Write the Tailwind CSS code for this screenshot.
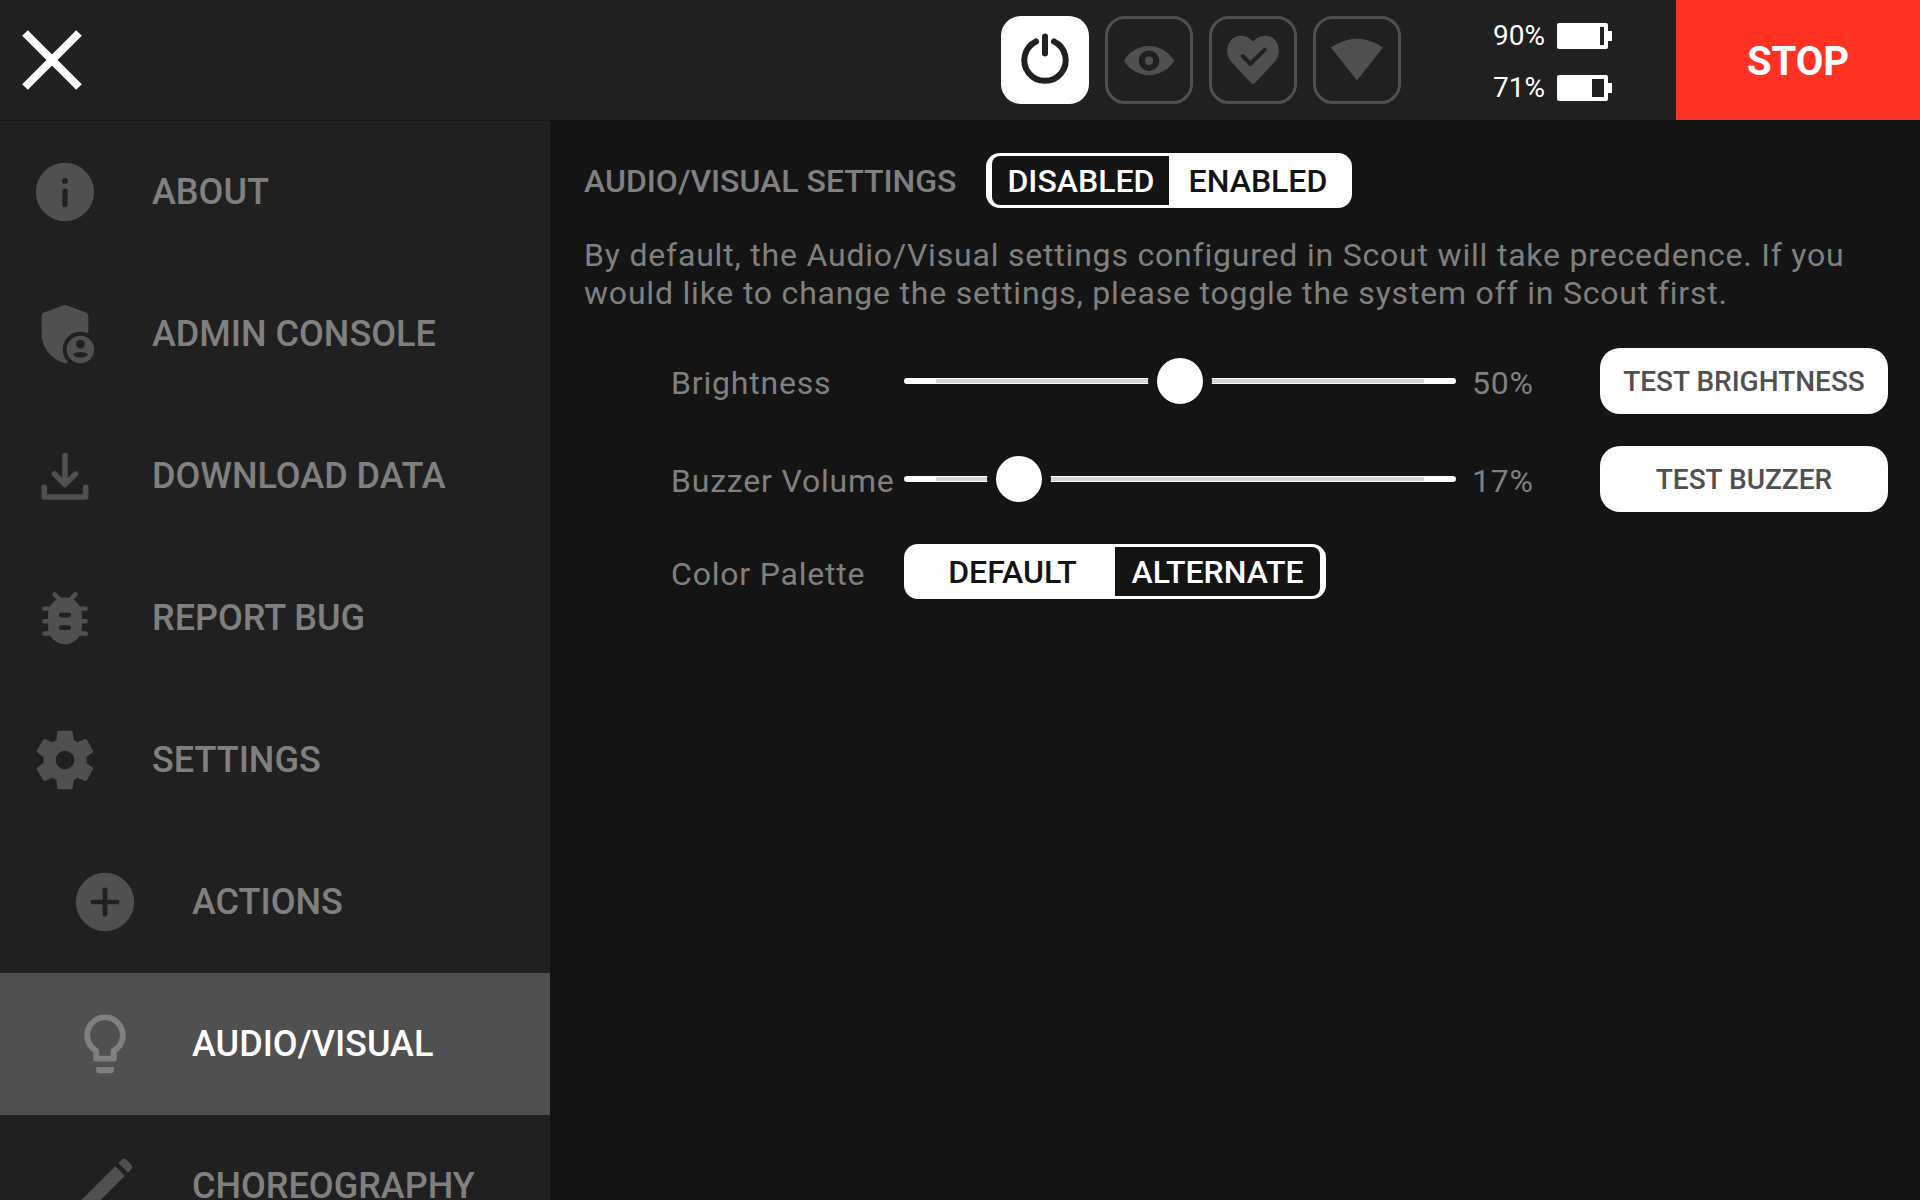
<!DOCTYPE html>
<html lang="en">
<head>
  <meta charset="UTF-8">
  <meta name="viewport" content="width=device-width,initial-scale=1">
  <title>Audio/Visual Settings</title>
  <script src="https://cdn.jsdelivr.net/npm/@tailwindcss/browser@4"></script>
</head>
<body class="h-screen flex flex-col overflow-hidden bg-[#141414] text-[#808080] font-['Roboto',sans-serif]">

  <!-- Top bar -->
  <header class="h-[120px] shrink-0 flex items-center bg-[#202020]">
    <button type="button" aria-label="Close" class="ml-[22px] text-white">
      <svg class="size-15" viewBox="0 0 60 60" fill="none" stroke="currentColor" stroke-width="8"><path d="M3 3l54 54M57 3L3 57"/></svg>
    </button>

    <div class="ml-auto mr-[92px] flex gap-4">
      <button type="button" aria-label="Power" class="size-[88px] rounded-[20px] bg-white text-[#202020] flex items-center justify-center">
        <svg class="size-15" viewBox="-30 -30 60 60" fill="none" stroke="currentColor" stroke-width="6" stroke-linecap="round"><path d="M-9-18.5A20.7 20.7 0 1 0 9-18.5M0-23.5V-6.500"/></svg>
      </button>
      <button type="button" aria-label="Vision" class="size-[88px] rounded-[20px] border-3 border-[#505050] text-[#505050] flex items-center justify-center">
        <svg class="size-15" viewBox="-30 -30 60 60" fill="currentColor"><path d="M-24.500 2Q-25.500.7-24.500-.6C-12-18.500 12-18.500 24.500-.6Q25.500.7 24.500 2C12 19.500-12 19.500-24.500 2z"/><circle cy=".7" r="10.300" fill="#202020"/><circle cy=".7" r="4.200"/></svg>
      </button>
      <button type="button" aria-label="Health" class="size-[88px] rounded-[20px] border-3 border-[#505050] text-[#505050] flex items-center justify-center">
        <svg class="size-15" viewBox="-30 -30 60 60" fill="currentColor"><path d="M-1.500 23.500L-22 1.500C-30-8-25-24.300-12-24.300C-7-24.300-3-22 0-18.500C3-22 7-24.300 12-24.300C25-24.300 30-8 22 1.500L1.500 23.500Q0 24.700-1.500 23.500z"/><path d="M-10.300-4l7.600 8L11.700-10.300" fill="none" stroke="#202020" stroke-width="4" stroke-linecap="round"/></svg>
      </button>
      <button type="button" aria-label="Signal" class="size-[88px] rounded-[20px] border-3 border-[#505050] text-[#505050] flex items-center justify-center">
        <svg class="size-15" viewBox="-30 -30 60 60" fill="currentColor"><path d="M-26-12.500Q0-30 26-12.500L.8 19.500Q0 20.500-.8 19.500z"/></svg>
      </button>
    </div>

    <!-- Batteries -->
    <div class="mr-16 pt-1 flex flex-col gap-5 text-[28px] leading-8 text-white">
      <div class="flex items-center justify-between gap-3">
        <span>90%</span>
        <svg class="w-[55px] h-[26px]" viewBox="0 0 55 26" fill="currentColor"><rect width="51" height="26" rx="2"/><path d="M51 8h4v10h-4z"/><path fill="#202020" d="M43 4h4v18h-4z"/></svg>
      </div>
      <div class="flex items-center justify-between gap-3">
        <span>71%</span>
        <svg class="w-[55px] h-[26px]" viewBox="0 0 55 26" fill="currentColor"><rect width="51" height="26" rx="2"/><path d="M51 8h4v10h-4z"/><path fill="#202020" d="M35 4h12v18H35z"/></svg>
      </div>
    </div>

    <button type="button" class="h-full w-[244px] pt-1 bg-[#ff3224] text-white text-[40px] font-bold">STOP</button>
  </header>

  <div class="flex-1 min-h-0 flex">
    <!-- Sidebar -->
    <nav class="w-[550px] shrink-0 overflow-hidden border-t border-[#161616] bg-[#202020] text-4xl font-medium">
      <a href="#" class="h-[142px] pl-[30px] flex items-center gap-[52px]">
        <svg class="size-[70px] text-[#505050]" viewBox="0 0 24 24" fill="currentColor"><circle cx="12" cy="12" r="10"/><circle cx="12" cy="8.200" r="1" fill="#202020"/><path d="M12 11.700v4.600" stroke="#202020" stroke-width="1.800" stroke-linecap="round"/></svg>
        ABOUT
      </a>
      <a href="#" class="h-[142px] pl-[30px] flex items-center gap-[52px]">
        <svg class="size-[70px] text-[#505050]" viewBox="0 0 24 24" fill="currentColor"><path d="M11.500 2.100a1.500 1.500 0 0 1 1 0l6.700 2.500a1.200 1.200 0 0 1 .8 1.100V11.500L13 21.800q-.5.300-1 .200c-4.600-1.100-8-5.400-8-10V5.700a1.200 1.200 0 0 1 .8-1.100z"/><circle cx="17.300" cy="17.300" r="6.100" fill="#202020"/><circle cx="17.300" cy="17.300" r="4.700"/><g fill="#202020"><circle cx="17.300" cy="15.500" r="1.500"/><path d="M14.700 19c1.400-1.100 3.800-1.100 5.200 0-1.400 1.500-3.800 1.500-5.200 0z"/></g></svg>
        ADMIN CONSOLE
      </a>
      <a href="#" class="h-[142px] pl-[30px] flex items-center gap-[52px]">
        <svg class="size-[70px] text-[#505050]" viewBox="0 0 24 24" fill="none" stroke="currentColor" stroke-width="1.900" stroke-linecap="round"><path d="M12 5v9.500M8.400 11.300l3.600 3.600 3.600-3.600M4.900 15.900v3.300h14.200v-3.300" stroke-linejoin="round"/></svg>
        DOWNLOAD DATA
      </a>
      <a href="#" class="h-[142px] pl-[30px] flex items-center gap-[52px]">
        <svg class="size-[70px] text-[#505050]" viewBox="0 0 24 24" fill="currentColor"><rect x="6.200" y="5" width="11.600" height="16" rx="5.800"/><path d="M8.400 3.900l2 2M15.600 3.900l-2 2M4.900 8.800h14.200M4.900 13.100h14.200M4.900 17.300h14.200" stroke="currentColor" stroke-width="1.500" stroke-linecap="round"/><path d="M10.700 11h2.600M10.700 15.300h2.600" stroke="#202020" stroke-width="1.600" stroke-linecap="round"/></svg>
        REPORT BUG
      </a>
      <a href="#" class="h-[142px] pl-[30px] flex items-center gap-[52px]">
        <svg class="size-[70px] text-[#505050]" viewBox="0 0 24 24" fill="currentColor"><path stroke="currentColor" stroke-width=".8" stroke-linejoin="round" d="M9.800 21.600l-.4-3q-1-.4-1.700-1l-2.800 1.200-2.200-3.800 2.400-1.800q-.2-1.200 0-2.400L2.700 9l2.200-3.800 2.800 1.200q.8-.6 1.700-1l.4-3h4.400l.4 3q1 .4 1.700 1l2.800-1.200L21.300 9l-2.400 1.800q.2 1.200 0 2.400l2.400 1.800-2.200 3.800-2.800-1.200q-.8.6-1.700 1l-.4 3z"/><circle cx="12" cy="12" r="3.200" fill="#202020"/></svg>
        SETTINGS
      </a>
      <a href="#" class="h-[142px] pl-[70px] flex items-center gap-[52px]">
        <svg class="size-[70px] text-[#505050]" viewBox="0 0 24 24" fill="currentColor"><circle cx="12" cy="12" r="10"/><path d="M12 7.800v8.400M7.800 12h8.400" stroke="#202020" stroke-width="1.600" stroke-linecap="round"/></svg>
        ACTIONS
      </a>
      <a href="#" aria-current="page" class="h-[142px] pl-[70px] flex items-center gap-[52px] bg-[#505050] text-white">
        <svg class="size-[70px] text-[#808080]" viewBox="0 0 24 24" fill="none" stroke="currentColor" stroke-width="2" stroke-linejoin="round"><path d="M9 17v-2.700a6.100 6.100 0 1 1 6 0V17z"/><path fill="currentColor" stroke="none" d="M9 19.900h6v1.100a1 1 0 0 1-1 1h-4a1 1 0 0 1-1-1z"/></svg>
        AUDIO/VISUAL
      </a>
      <a href="#" class="h-[142px] pl-[70px] flex items-center gap-[52px]">
        <svg class="size-[70px] text-[#505050]" viewBox="0 0 24 24" fill="currentColor"><path d="M2.600 21.400v-3.300L15.500 5.200l3.300 3.300L5.900 21.400zM16.600 4.100l1-1a1.300 1.300 0 0 1 1.800 0l1.500 1.500a1.300 1.300 0 0 1 0 1.800l-1 1z"/></svg>
        CHOREOGRAPHY
      </a>
    </nav>

    <!-- Settings panel -->
    <main class="flex-1 min-w-0 pt-[33px] pl-[34px] pr-8 text-[32px]">
      <div class="flex items-center gap-[30px]">
        <h1 id="av-label" class="font-medium">AUDIO/VISUAL SETTINGS</h1>
        <div role="radiogroup" aria-labelledby="av-label" class="w-[366px] h-[55px] px-[6px] py-[3px] grid grid-cols-2 rounded-[14px] bg-white font-medium text-white">
          <label class="flex items-center justify-center rounded-l-lg bg-[#141414] has-checked:bg-white has-checked:text-[#141414]"><input type="radio" name="av" class="sr-only">DISABLED</label>
          <label class="flex items-center justify-center rounded-r-lg bg-[#141414] has-checked:bg-white has-checked:text-[#141414]"><input type="radio" name="av" class="sr-only" checked>ENABLED</label>
        </div>
      </div>

      <p class="mt-7 leading-[38px] tracking-wide">By default, the Audio/Visual settings configured in Scout will take precedence. If you would like to change the settings, please toggle the system off in Scout first.</p>

      <div class="mt-5 pl-[87px] grid grid-cols-[233px_1fr_144px_288px] auto-rows-[98px] items-center">
        <label for="brightness" class="pt-1 tracking-wide">Brightness</label>
        <input id="brightness" type="range" min="0" max="100" value="50" class="w-full h-16 appearance-none bg-transparent [&::-webkit-slider-runnable-track]:h-[6px] [&::-webkit-slider-runnable-track]:rounded-full [&::-webkit-slider-runnable-track]:bg-white [&::-webkit-slider-runnable-track]:bg-[linear-gradient(#d4d4d4,#d4d4d4)] [&::-webkit-slider-runnable-track]:bg-[length:calc(100%-64px)_4px] [&::-webkit-slider-runnable-track]:bg-center [&::-webkit-slider-runnable-track]:bg-no-repeat [&::-webkit-slider-thumb]:appearance-none [&::-webkit-slider-thumb]:size-16 [&::-webkit-slider-thumb]:-mt-[29px] [&::-webkit-slider-thumb]:rounded-full [&::-webkit-slider-thumb]:border-9 [&::-webkit-slider-thumb]:border-[#141414] [&::-webkit-slider-thumb]:bg-white">
        <output for="brightness" class="pt-1 pl-4 tracking-wide">50%</output>
        <button type="button" class="h-[66px] pt-[2px] rounded-[20px] bg-white text-[#505050] text-[28px] font-medium">TEST BRIGHTNESS</button>

        <label for="buzzer" class="pt-1 tracking-wide">Buzzer Volume</label>
        <input id="buzzer" type="range" min="0" max="100" value="17" class="w-full h-16 appearance-none bg-transparent [&::-webkit-slider-runnable-track]:h-[6px] [&::-webkit-slider-runnable-track]:rounded-full [&::-webkit-slider-runnable-track]:bg-white [&::-webkit-slider-runnable-track]:bg-[linear-gradient(#d4d4d4,#d4d4d4)] [&::-webkit-slider-runnable-track]:bg-[length:calc(100%-64px)_4px] [&::-webkit-slider-runnable-track]:bg-center [&::-webkit-slider-runnable-track]:bg-no-repeat [&::-webkit-slider-thumb]:appearance-none [&::-webkit-slider-thumb]:size-16 [&::-webkit-slider-thumb]:-mt-[29px] [&::-webkit-slider-thumb]:rounded-full [&::-webkit-slider-thumb]:border-9 [&::-webkit-slider-thumb]:border-[#141414] [&::-webkit-slider-thumb]:bg-white">
        <output for="buzzer" class="pt-1 pl-4 tracking-wide">17%</output>
        <button type="button" class="h-[66px] pt-[2px] rounded-[20px] bg-white text-[#505050] text-[28px] font-medium">TEST BUZZER</button>
      </div>

      <div class="mt-4 pl-[87px] grid grid-cols-[233px_1fr] items-center">
        <span id="palette-label" class="pt-1 tracking-wide">Color Palette</span>
        <div role="radiogroup" aria-labelledby="palette-label" class="w-[422px] h-[55px] px-[6px] py-[3px] grid grid-cols-2 rounded-[14px] bg-white font-medium text-white">
          <label class="flex items-center justify-center rounded-l-lg bg-[#141414] has-checked:bg-white has-checked:text-[#141414]"><input type="radio" name="palette" class="sr-only" checked>DEFAULT</label>
          <label class="flex items-center justify-center rounded-r-lg bg-[#141414] has-checked:bg-white has-checked:text-[#141414]"><input type="radio" name="palette" class="sr-only">ALTERNATE</label>
        </div>
      </div>
    </main>
  </div>

  <script>
    // keep the percentages in step with the sliders
    document.querySelectorAll('input[type=range]').forEach(el => {
      el.addEventListener('input', () => {
        document.querySelector(`output[for=${el.id}]`).textContent = el.value + '%';
      });
    });
  </script>
</body>
</html>
